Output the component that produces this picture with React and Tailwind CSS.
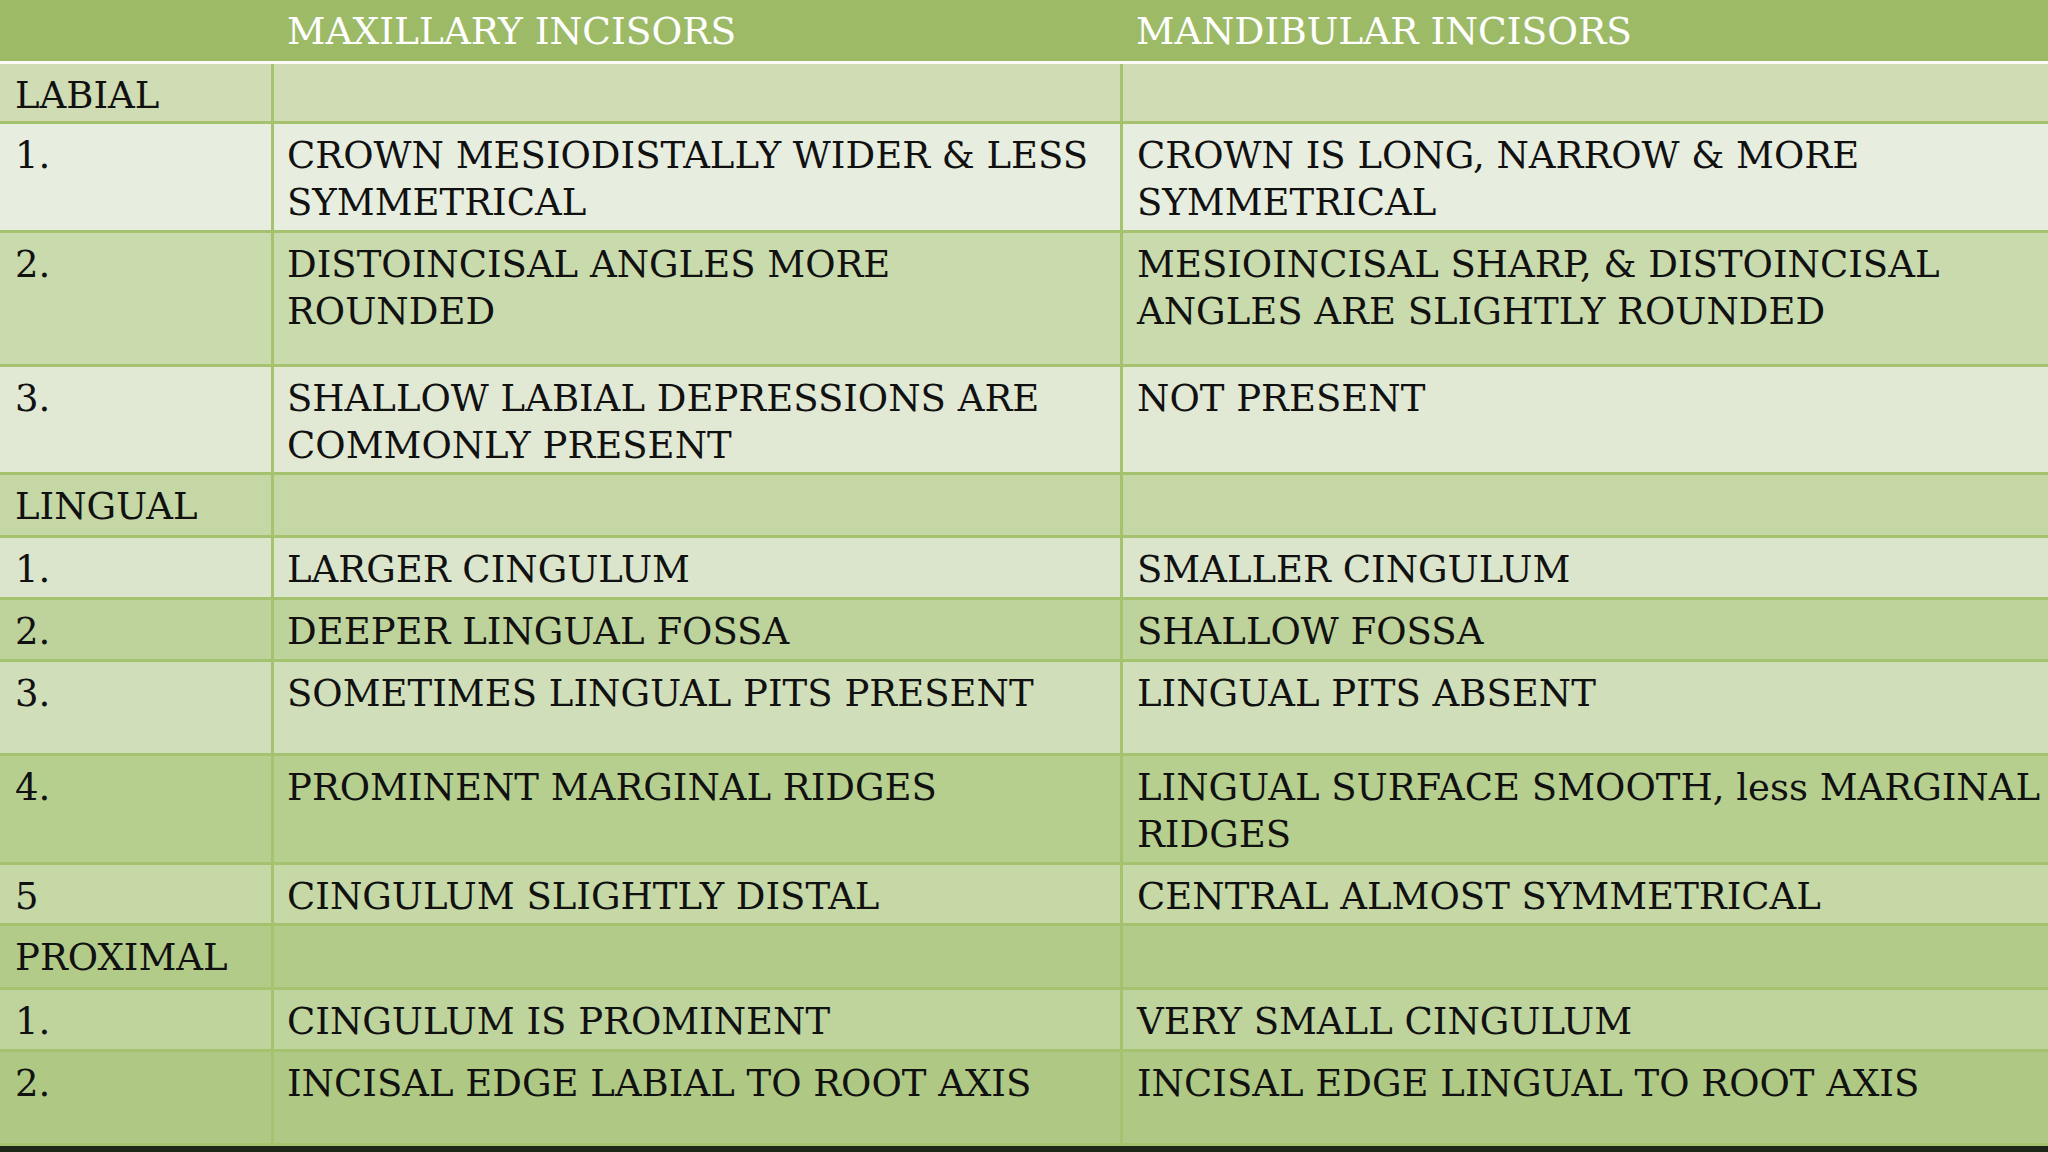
import React from 'react';

const rows = [
    { section: 'LABIAL', h: 'h-[60px]', bg: 'bg-[#d0dcb4]' },
    { n: '1.', b: ['CROWN MESIODISTALLY WIDER & LESS', 'SYMMETRICAL'], c: ['CROWN IS LONG, NARROW & MORE', 'SYMMETRICAL'], h: 'h-[109px]', bg: 'bg-[#e7eddf]' },
    { n: '2.', b: ['DISTOINCISAL ANGLES MORE', 'ROUNDED'], c: ['MESIOINCISAL SHARP, & DISTOINCISAL', 'ANGLES ARE SLIGHTLY ROUNDED'], h: 'h-[134px]', bg: 'bg-[#c9daad]' },
    { n: '3.', b: ['SHALLOW LABIAL DEPRESSIONS ARE', 'COMMONLY PRESENT'], c: ['NOT PRESENT'], h: 'h-[108px]', bg: 'bg-[#e1e9d5]' },
    { section: 'LINGUAL', h: 'h-[63px]', bg: 'bg-[#c4d7a5]' },
    { n: '1.', b: ['LARGER CINGULUM'], c: ['SMALLER CINGULUM'], h: 'h-[62px]', bg: 'bg-[#dbe5cc]' },
    { n: '2.', b: ['DEEPER LINGUAL FOSSA'], c: ['SHALLOW FOSSA'], h: 'h-[62px]', bg: 'bg-[#bed39b]' },
    { n: '3.', b: ['SOMETIMES LINGUAL PITS PRESENT'], c: ['LINGUAL PITS ABSENT'], h: 'h-[94px]', bg: 'bg-[#d0dfba]' },
    { n: '4.', b: ['PROMINENT MARGINAL RIDGES'], c: ['LINGUAL SURFACE SMOOTH, less MARGINAL', 'RIDGES'], h: 'h-[109px]', bg: 'bg-[#b6cf8f]' },
    { n: '5', b: ['CINGULUM SLIGHTLY DISTAL'], c: ['CENTRAL ALMOST SYMMETRICAL'], h: 'h-[61px]', bg: 'bg-[#c5d8a6]' },
    { section: 'PROXIMAL', h: 'h-[64px]', bg: 'bg-[#b2cb89]' },
    { n: '1.', b: ['CINGULUM IS PROMINENT'], c: ['VERY SMALL CINGULUM'], h: 'h-[62px]', bg: 'bg-[#bfd49d]' },
    { n: '2.', b: ['INCISAL EDGE LABIAL TO ROOT AXIS'], c: ['INCISAL EDGE LINGUAL TO ROOT AXIS'], h: 'h-[94px]', bg: 'bg-[#afc985]' },
];

function Lines({ items }) {
    return (
        <div className="flex flex-col">
            {items.map((t, i) => (
                <div key={i} className="whitespace-nowrap">{t}</div>
            ))}
        </div>
    );
}

export default function App() {
    return (
        <div className="w-[2048px] h-[1152px] overflow-hidden bg-[#1e2619] text-[#111] text-[37px] leading-[47px] font-['DejaVu_Serif',serif]">
            {/* Header */}
            <div className="h-[61px] bg-[#9dbb67] flex text-white text-[37.5px] leading-[63px]">
                <div className="w-[274px] shrink-0"></div>
                <div className="w-[849px] shrink-0 pl-[13px] whitespace-nowrap">MAXILLARY INCISORS</div>
                <div className="flex-1 pl-[13px] whitespace-nowrap">MANDIBULAR INCISORS</div>
            </div>
            <div className="h-[3px] bg-[#fbfcf8]"></div>

            {/* Body */}
            <div className="flex flex-col">
                {rows.map((r, i) => (
                    <div key={i} className={`flex border-b-[3px] border-[#a5c36f] ${r.h} ${r.bg}`}>
                        <div className="w-[274px] shrink-0 border-r-[3px] border-[#a5c36f] pl-[15px] pt-[8px] whitespace-nowrap">
                            {r.section || r.n}
                        </div>
                        <div className="w-[849px] shrink-0 border-r-[3px] border-[#a5c36f] pl-[13px] pt-[8px] overflow-hidden">
                            {r.b && <Lines items={r.b} />}
                        </div>
                        <div className="flex-1 min-w-0 pl-[14px] pt-[8px] overflow-hidden">
                            {r.c && <Lines items={r.c} />}
                        </div>
                    </div>
                ))}
            </div>
        </div>
    );
}
